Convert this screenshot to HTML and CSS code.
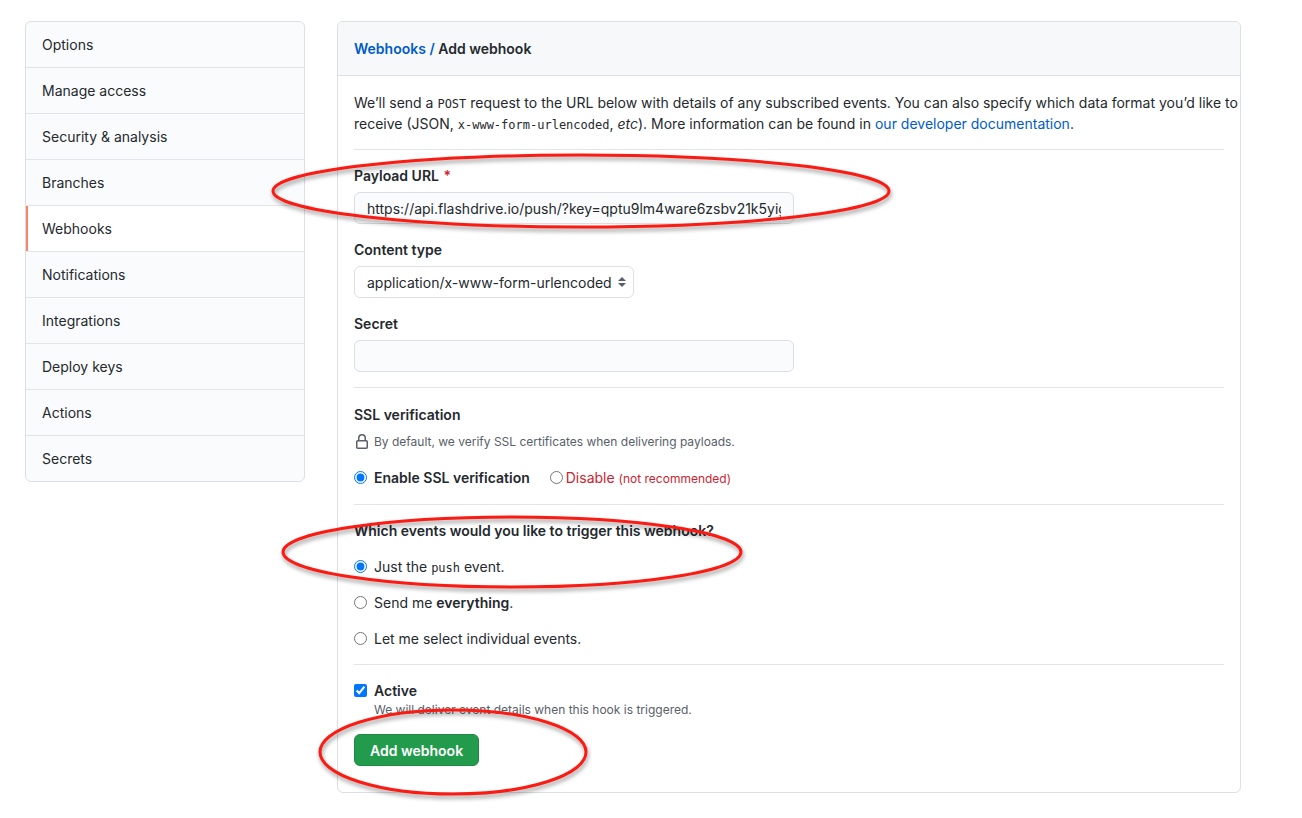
FILE: index.html
```html
<!DOCTYPE html>
<html lang="en">
<head>
    <meta charset="UTF-8">
    <meta name="viewport" content="width=device-width, initial-scale=1.0">
    <title>Add webhook</title>
    <link rel="stylesheet" href="styles.css">
</head>
<body>
    <div class="settings">
        <nav class="menu" aria-label="Repository settings">
            <a href="#">Options</a>
            <a href="#">Manage access</a>
            <a href="#">Security &amp; analysis</a>
            <a href="#">Branches</a>
            <a href="#" class="selected" aria-current="page">Webhooks</a>
            <a href="#">Notifications</a>
            <a href="#">Integrations</a>
            <a href="#">Deploy keys</a>
            <a href="#">Actions</a>
            <a href="#">Secrets</a>
        </nav>

        <main class="panel">
            <h1 class="panel-header"><a href="#">Webhooks /</a> Add webhook</h1>

            <form class="panel-body">
                <p class="intro">
                    We’ll send a <code>POST</code> request to the URL below with details of any subscribed events. You can also specify which data format you’d like to receive (JSON, <code>x-www-form-urlencoded</code>, <em>etc</em>). More information can be found in <a href="#">our developer documentation</a>.
                </p>

                <hr>

                <div class="field marked">
                    <label for="payload-url">Payload URL <span class="required">*</span></label>
                    <input type="text" id="payload-url" value="https://api.flashdrive.io/push/?key=qptu9lm4ware6zsbv21k5yigjd">
                    <svg class="ring ring-url" viewBox="0 0 620 76" aria-hidden="true">
                        <ellipse cx="310" cy="38" rx="308" ry="36"/>
                    </svg>
                </div>

                <div class="field">
                    <label for="content-type">Content type</label>
                    <div class="select-wrap">
                        <select id="content-type">
                            <option>application/x-www-form-urlencoded</option>
                            <option>application/json</option>
                        </select>
                        <svg class="arrows" viewBox="0 0 8 10" aria-hidden="true">
                            <path d="M4 0l4 4H0zM4 10L0 6h8z"/>
                        </svg>
                    </div>
                </div>

                <div class="field">
                    <label for="secret">Secret</label>
                    <input type="text" id="secret">
                </div>

                <hr>

                <section class="ssl">
                    <h2>SSL verification</h2>
                    <p class="note with-icon">
                        <svg class="lock" viewBox="0 0 16 16" aria-hidden="true">
                            <path fill-rule="evenodd" d="M4 4v2h-.25A1.75 1.75 0 002 7.750v5.5c0 .966.784 1.750 1.750 1.750h8.500A1.750 1.750 0 0014 13.250v-5.500A1.750 1.750 0 0012.250 6H12V4a4 4 0 10-8 0zm6.500 2V4a2.500 2.500 0 10-5 0v2h5zM12 7.500h.250a.25.25 0 01.25.25v5.500a.25.25 0 01-.25.25h-8.500a.25.25 0 01-.25-.25v-5.500a.25.25 0 01.25-.25H12z"/>
                        </svg>
                        By default, we verify SSL certificates when delivering payloads.
                    </p>
                    <div class="ssl-options">
                        <label class="choice strong"><input type="radio" name="ssl" checked> Enable SSL verification</label>
                        <label class="choice danger"><input type="radio" name="ssl"> <span>Disable <small>(not recommended)</small></span></label>
                    </div>
                </section>

                <hr>

                <section class="events marked">
                    <h2>Which events would you like to trigger this webhook?</h2>
                    <label class="choice"><input type="radio" name="events" checked> <span>Just the <code>push</code> event.</span></label>
                    <label class="choice"><input type="radio" name="events"> <span>Send me <b>everything</b>.</span></label>
                    <label class="choice"><input type="radio" name="events"> Let me select individual events.</label>
                    <svg class="ring ring-events" viewBox="0 0 462 74" aria-hidden="true">
                        <ellipse cx="231" cy="37" rx="229" ry="35"/>
                    </svg>
                </section>

                <hr>

                <div class="active">
                    <label class="choice strong"><input type="checkbox" checked aria-describedby="active-note"> Active</label>
                    <p class="note" id="active-note">We will deliver event details when this hook is triggered.</p>
                </div>

                <div class="actions marked">
                    <button type="submit">Add webhook</button>
                    <svg class="ring ring-submit" viewBox="0 0 270 88" aria-hidden="true">
                        <ellipse cx="135" cy="44" rx="133" ry="42"/>
                    </svg>
                </div>
            </form>
        </main>
    </div>
</body>
</html>
```
FILE: styles.css
```css
* {
    box-sizing: border-box;
}

body {
    margin: 0;
    background-color: #fff;
    color: #24292e;
    font-family: Inter, "Liberation Sans", sans-serif;
    font-size: 14px;
    line-height: 21px;
}

a {
    color: #005cc5;
    text-decoration: none;
}

h1,
h2 {
    margin: 0;
    font-size: 14px;
    font-weight: 600;
}

p {
    margin: 0;
}

b {
    font-weight: 600;
}

hr {
    height: 1px;
    margin: 15px 0;
    border: 0;
    background-color: #e1e4e8;
}

code {
    font-family: "DejaVu Sans Mono", monospace;
    font-size: 12px;
    line-height: 1;
}

.settings {
    display: flex;
    align-items: flex-start;
    gap: 32px;
    padding: 21px 61px 24px 25px;
}

/* Side menu */
.menu {
    flex: 0 0 280px;
    overflow: hidden;
    border: 1px solid #dcdfe4;
    border-radius: 6px;
    background-color: #fafbfc;
}

.menu a {
    display: block;
    padding: 12px 16px;
    border-bottom: 1px solid #e1e4e8;
    color: #24292e;
}

.menu a:last-child {
    border-bottom: 0;
}

.menu .selected {
    background-color: #fff;
    box-shadow: inset 2px 0 #f9826c;
}

/* Main panel */
.panel {
    flex: 1;
    min-width: 0;
    border: 1px solid #dcdfe4;
    border-radius: 6px;
}

.panel-header {
    padding: 16px;
    border-bottom: 1px solid #dcdfe4;
    border-radius: 6px 6px 0 0;
    background-color: #f6f8fa;
}

.panel-body {
    padding: 16px 16px 26px;
}

.intro {
    margin-right: -16px;
}

/* Form fields */
.field {
    margin-bottom: 15px;
}

.field label {
    display: block;
    margin-bottom: 6px;
    font-weight: 600;
}

.required {
    margin-left: 1px;
    color: #cb2431;
}

.field input,
select {
    height: 32px;
    padding: 0 12px;
    border: 1px solid #dcdfe4;
    border-radius: 6px;
    background-color: #fafbfc;
    color: #24292e;
    font: inherit;
}

.field input {
    display: block;
    width: 440px;
    max-width: 100%;
}

.select-wrap {
    position: relative;
    width: 280px;
}

select {
    display: block;
    width: 100%;
    padding-right: 18px;
    background-color: #fff;
    appearance: none;
}

.arrows {
    position: absolute;
    top: 11px;
    right: 8px;
    width: 8px;
    height: 10px;
    fill: #586069;
    pointer-events: none;
}

/* Radios and checkbox */
.choice {
    display: flex;
    align-items: center;
    gap: 7px;
}

.choice input {
    flex: none;
    width: 13px;
    height: 13px;
    margin: 0;
}

.strong {
    font-weight: 600;
}

.danger {
    gap: 3px;
    color: #cb2431;
}

.danger small {
    font-size: 12px;
    line-height: 1;
}

.note {
    color: #586069;
    font-size: 12px;
    line-height: 18px;
}

.with-icon {
    display: flex;
    align-items: center;
    gap: 4px;
}

.lock {
    width: 16px;
    height: 16px;
    fill: #586069;
}

.ssl {
    padding: 1px 0;
}

.ssl .note {
    margin: 8px 0 16px;
}

.ssl-options {
    display: flex;
    gap: 20px;
}

.events .choice {
    margin-top: 15px;
}

.active {
    padding-bottom: 15px;
}

.active .note {
    padding-left: 20px;
}

button {
    display: block;
    height: 32px;
    padding: 0 15px;
    border: 1px solid #1e8a43;
    border-radius: 6px;
    background-color: #229c4c;
    color: #fff;
    font: inherit;
    font-weight: 600;
    cursor: pointer;
}

/* Hand-drawn style rings over the steps to follow */
.marked {
    position: relative;
}

.ring {
    position: absolute;
    overflow: visible;
    fill: none;
    stroke: #fb1b13;
    stroke-width: 3;
    filter: drop-shadow(1px 3px 2px rgba(0, 0, 0, 0.4));
    pointer-events: none;
}

.ring-url {
    top: -12px;
    left: -83px;
    width: 620px;
    height: 76px;
}

.ring-events {
    top: -5px;
    left: -73px;
    width: 462px;
    height: 74px;
}

.ring-submit {
    top: -26px;
    left: -36px;
    width: 270px;
    height: 88px;
}
```
